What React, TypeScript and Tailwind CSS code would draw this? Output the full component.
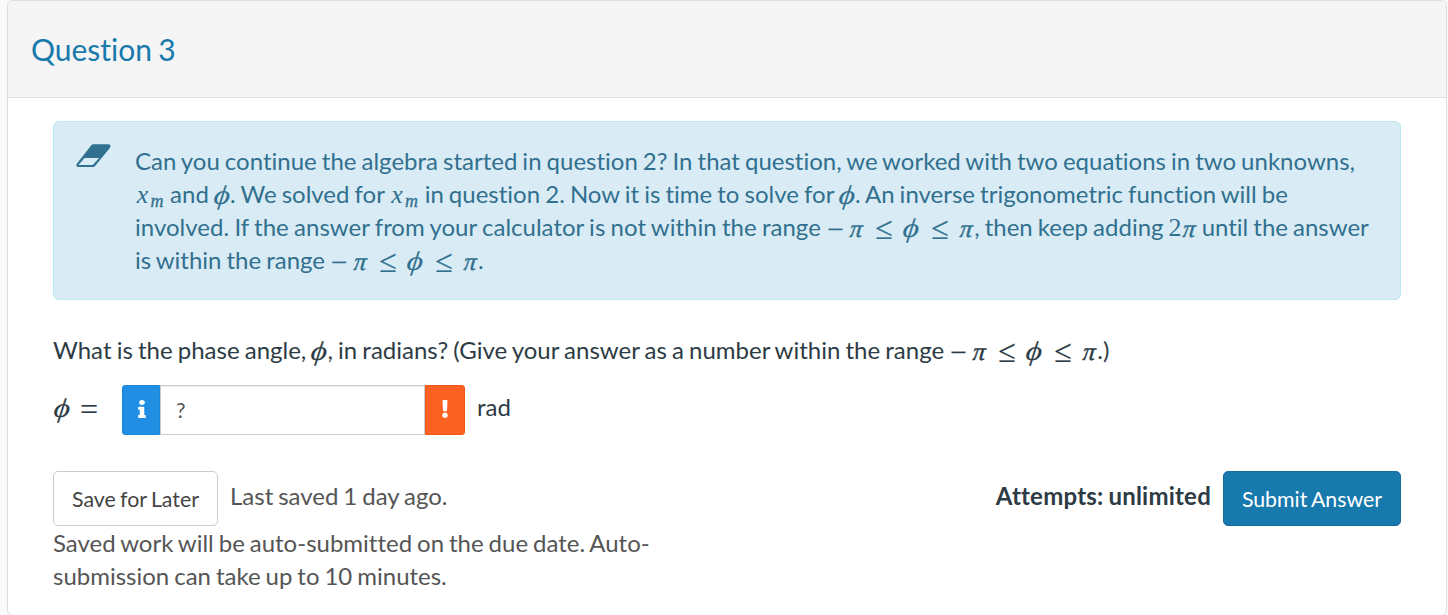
import React from "react";
import { FaInfo, FaExclamation } from "react-icons/fa";

const glyph = "relative inline-flex justify-center leading-none italic font-['Liberation_Serif',serif]";

function Phi() {
  return <span className={`${glyph} top-px w-[16px] scale-x-[1.15] -skew-x-6 text-[27px] [-webkit-text-stroke:0.2px_currentColor]`}>ϕ</span>;
}

function Pi() {
  return <span className={`${glyph} top-px w-[15px] -skew-x-6 text-[25px] [-webkit-text-stroke:0.4px_currentColor]`}>π</span>;
}

function Leq() {
  return <span className="relative top-[2px] inline-flex w-[20px] scale-[1.06] justify-center leading-none font-['Liberation_Serif',serif] text-[30px] [-webkit-text-stroke:0.2px_currentColor]">≤</span>;
}

function Xm() {
  return (
    <span className="font-['Liberation_Serif',serif] italic leading-none">
      <span className="inline-flex w-[15px] justify-center text-[26px] leading-none">x</span>
      <span className="relative top-[4px] mr-px inline-flex w-[14px] justify-center text-[18px] leading-none [-webkit-text-stroke:0.3px_currentColor]">m</span>
    </span>
  );
}

function Range() {
  return (
    <span className="whitespace-nowrap">
      <span className="relative top-[3px] inline-flex w-[23px] pl-px leading-none font-['Liberation_Serif',serif] text-[29px] [-webkit-text-stroke:0.4px_currentColor]">−</span>
      <Pi />
      <span className="inline-block w-[10px]" />
      <Leq />
      <span className="inline-block w-[9px]" />
      <Phi />
      <span className="inline-block w-[11px]" />
      <Leq />
      <span className="inline-block w-[9px]" />
      <Pi />
    </span>
  );
}

function Eraser() {
  return (
    <svg width="35" height="24" viewBox="0 0 35 24" className="block" aria-hidden="true">
      <path
        fillRule="evenodd"
        fill="currentColor"
        d="M17.2 0.2H32.6Q35 0.4 34.4 2.8L33.8 3.9L18.9 22.2Q18.1 23 17 23H2.4Q0 22.8 0.4 20.5L1 19.4L15.5 1.1Q16.2 0.3 17.2 0.2ZM16.7 21L23.1 14H8.6L2.4 21Z"
      />
    </svg>
  );
}

export default function App() {
  return (
    <div className="h-[615px] overflow-hidden bg-[#fafafa] pl-[7px] font-['Lato',sans-serif] text-[24px] leading-[33px] text-[#2d3b45] [font-variant-ligatures:none] [word-spacing:-1.1px]">
      <section className="h-[616px] w-[1440px] rounded-md border border-[#dddddd] bg-white">
        <header className="flex h-[97px] items-center rounded-t-md border-b border-[#dddddd] bg-[#f5f5f5] pl-[23px]">
          <h2 className="text-[30px] leading-[33px] text-[#1879ad] [word-spacing:-1.5px]">Question 3</h2>
        </header>
        <div className="pr-[45px] pl-[45px] pt-[23px]">
          <div className="flex h-[179px] rounded-md border border-[#bce8f1] bg-[#d9ecf5] pl-[22px] pt-[22px] text-[#31708f]">
            <div className="w-[59px] shrink-0">
              <Eraser />
            </div>
            <div className="whitespace-nowrap">
              <div className="h-[33px]">Can you continue the algebra started in question 2? In that question, we worked with two equations in two unknowns,</div>
              <div className="h-[33px] [word-spacing:-1.05px]"><Xm /> and <Phi />. We solved for <Xm /> in question 2. Now it is time to solve for <Phi />. An inverse trigonometric function will be</div>
              <div className="h-[33px]"><span className="[word-spacing:-0.8px]">involved. If the answer from your calculator is not within the range <Range /></span>, then keep adding <span className="font-['Liberation_Serif',serif] text-[26px] leading-none">2</span><Pi /> until the answer</div>
              <div className="h-[33px]">is within the range <Range />.</div>
            </div>
          </div>
          <p className="mt-[33px] h-[33px] whitespace-nowrap [word-spacing:-1px]">
            What is the phase angle, <Phi />, in radians? (Give your answer as a number within the range <Range />.)
          </p>
          <div className="mt-[19px] flex h-[50px] items-center">
            <div className="flex w-[69px] items-center pb-[3px]">
              <span className="-mt-[3px] ml-px flex"><Phi /></span>
              <span className="ml-[10px] mt-[2px] font-['Liberation_Serif',serif] text-[32px] [-webkit-text-stroke:0.2px_currentColor]">=</span>
            </div>
            <div className="flex h-[50px] w-[343px]">
              <div className="flex w-[38px] items-center justify-center rounded-l-[3px] border border-[#1c86d6] bg-[#208ee2] pb-[2px] pl-[2px] text-white">
                <FaInfo size={18} className="scale-x-[1.15]" />
              </div>
              <div className="flex grow items-center border border-[#cccccc] bg-white pl-[15px] text-[21.33px] text-[#555555] shadow-[inset_0_1px_1px_rgba(0,0,0,0.075)]">?</div>
              <div className="flex w-[40px] items-center justify-center rounded-r-[3px] border border-[#f25717] bg-[#fb6120] pb-[2px] text-white">
                <FaExclamation size={18} />
              </div>
            </div>
            <span className="mb-[7px] ml-[12px]">rad</span>
          </div>
          <div className="mt-[36px] flex items-start justify-between">
            <div className="text-[#555555] [word-spacing:-1.2px]">
              <div className="flex">
                <button className="h-[55px] w-[165px] rounded-[5px] border border-[#cccccc] bg-white pt-[2px] text-[21.33px] text-[#444444] [word-spacing:-0.055em]">Save for Later</button>
                <span className="ml-[12px] mt-[8px]">Last saved 1 day ago.</span>
              </div>
              <p className="whitespace-nowrap">Saved work will be auto-submitted on the due date. Auto-<br />submission can take up to 10 minutes.</p>
            </div>
            <div className="flex">
              <span className="mr-[12px] mt-[8px] font-bold tracking-[0.22px]">Attempts: unlimited</span>
              <button className="h-[55px] w-[178px] rounded-[5px] border border-[#166c9b] bg-[#1879ad] pt-[2px] text-[21.33px] text-white [word-spacing:-0.055em]">Submit Answer</button>
            </div>
          </div>
        </div>
      </section>
    </div>
  );
}
